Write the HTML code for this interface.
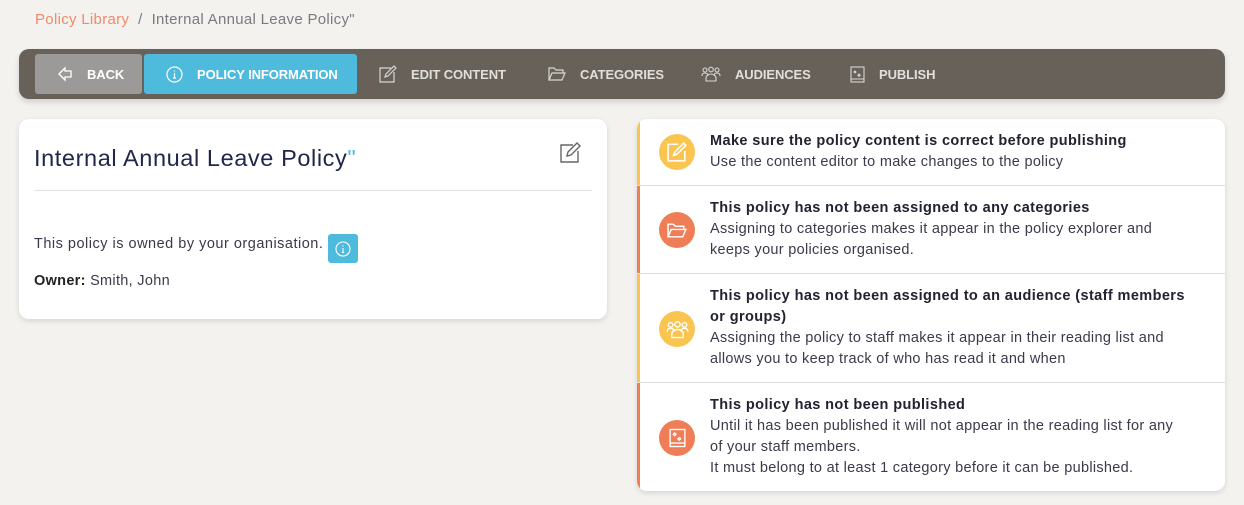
<!DOCTYPE html>
<html><head><meta charset="utf-8"><style>
*{box-sizing:border-box;margin:0;padding:0}
body{width:1244px;height:505px;background:#f3f2ef;font-family:"Liberation Sans",sans-serif;color:#2a2a33;position:relative;overflow:hidden}
.abs{position:absolute}
.bc{left:35px;top:11px;font-size:15px;color:#7a7a80;white-space:nowrap;letter-spacing:.3px}
.bc span.l{color:#ef8a6a}
.nav{left:19px;top:49px;width:1206px;height:50px;background:#67615a;border-radius:10px;box-shadow:0 3px 6px rgba(0,0,0,.15)}
.tab{position:absolute;top:5px;height:40px;display:flex;align-items:center;font-size:13px;font-weight:bold;color:#e2dfdb;white-space:nowrap;letter-spacing:-.1px}
.tab svg{margin-right:14px}
.card{background:#fff;border-radius:10px;box-shadow:0 2px 6px rgba(0,0,0,.12)}
.row{position:absolute;left:0;width:588px;border-top:1px solid #dedede}
.row .bar{position:absolute;left:0;top:0;bottom:0;width:3px}
.ic{position:absolute;left:22px;width:36px;height:36px;border-radius:50%;display:flex;align-items:center;justify-content:center}
.tx{position:absolute;left:73px;font-size:14.5px;line-height:21px;white-space:nowrap;letter-spacing:.3px;color:#3a3a4a}
.tx b{color:#222230;letter-spacing:.4px}
</style></head><body>
<div class="abs bc"><span class="l">Policy Library</span> &nbsp;/&nbsp; Internal Annual Leave Policy"</div>
<div class="abs nav">
 <div class="tab" style="left:16px;width:107px;background:#9b9a99;border-radius:3px;padding-left:22px"><svg width="16" height="16" viewBox="0 0 16 16" fill="none" stroke="#fff" stroke-width="1.3"><path d="M2 8 L8 2 V5 H14 V11 H8 V14 Z"/></svg><span style="color:#fff">BACK</span></div>
 <div class="tab" style="left:125px;width:213px;background:#4fbbdc;border-radius:3px;padding-left:22px"><svg width="17" height="17" viewBox="0 0 17 17" fill="none" stroke="#fff" stroke-width="1.2"><circle cx="8.5" cy="8.5" r="7.5"/><path d="M8.5 7v5M7 12h3M8.5 4.5v1"/></svg><span style="color:#fff">POLICY INFORMATION</span></div>
 <div class="tab" style="left:360px"><svg width="18" height="18" viewBox="0 0 18 18" fill="none" stroke="#d8d5d1" stroke-width="1.2"><path d="M12 3H1v14h14V7"/><path d="M6 12l1-3 8-8 2 2-8 8z"/></svg>EDIT CONTENT</div>
 <div class="tab" style="left:529px"><svg width="18" height="16" viewBox="0 0 18 16" fill="none" stroke="#d8d5d1" stroke-width="1.2"><path d="M1 14V2h5l2 2h7v3M1 14l3-7h13l-3 7z"/></svg>CATEGORIES</div>
 <div class="tab" style="left:682px"><svg width="20" height="16" viewBox="0 0 20 16" fill="none" stroke="#d8d5d1" stroke-width="1.1"><circle cx="4" cy="4" r="2"/><circle cx="10" cy="3.5" r="2.3"/><circle cx="16" cy="4" r="2"/><path d="M1 10c0-2 1-3 3-3s3 1 3 3M13 10c0-2 1-3 3-3s3 1 3 3M5 15v-3c0-2 2-4 5-4s5 2 5 4v3z"/></svg>AUDIENCES</div>
 <div class="tab" style="left:831px"><svg width="15" height="17" viewBox="0 0 15 17" fill="none" stroke="#d8d5d1" stroke-width="1.1"><rect x="1" y="1" width="13" height="15"/><path d="M1 13h13M5 5l1 1-1 1-1-1zM9 8l1.2 1.2L9 10.4 7.8 9.2z"/></svg>PUBLISH</div>
</div>

<div class="abs card" style="left:19px;top:119px;width:588px;height:200px">
 <div class="abs" style="left:15px;top:26px;font-size:23.5px;color:#22264a;letter-spacing:.6px">Internal Annual Leave Policy<span style="color:#4fbbdc">"</span></div>
 <svg class="abs" style="left:541px;top:23px" width="22" height="21" viewBox="0 0 22 21" fill="none" stroke="#666" stroke-width="1.4"><path d="M13 3H1v17h17V9"/><path d="M7 14l1-4 9-9 3 3-9 9z"/></svg>
 <div class="abs" style="left:15px;top:71px;width:558px;border-top:1px solid #e2e2e2"></div>
 <div class="abs" style="left:15px;top:117px;font-size:14.5px;color:#3a3a4a;letter-spacing:.5px;white-space:nowrap">This policy is owned by your organisation.</div>
 <div class="abs" style="left:309px;top:115px;width:30px;height:29px;background:#4fbbdc;border-radius:3px;display:flex;align-items:center;justify-content:center"><svg width="16" height="16" viewBox="0 0 16 16" fill="none" stroke="#fff" stroke-width="1.1"><circle cx="8" cy="8" r="7"/><path d="M8 7v4.5M6.8 11.5h2.4M8 4.5v1"/></svg></div>
 <div class="abs" style="left:15px;top:154px;font-size:14.5px;color:#3a3a4a;letter-spacing:.3px"><b style="color:#222">Owner:</b> Smith, John</div>
</div>

<div class="abs card" style="left:637px;top:119px;width:588px;height:372px;overflow:hidden">
 <div class="row" style="top:0;height:66px;border-top:none"><div class="bar" style="background:#f9c550"></div>
  <div class="ic" style="top:15px;background:#f9c550"><svg width="20" height="20" viewBox="0 0 18 18" fill="none" stroke="#fff" stroke-width="1.4"><path d="M10 2H1v15h15V8"/><path d="M6 12l1-3 8-8 2 2-8 8z"/></svg></div>
  <div class="tx" style="top:12px"><b>Make sure the policy content is correct before publishing</b><br>Use the content editor to make changes to the policy</div></div>
 <div class="row" style="top:66px;height:88px"><div class="bar" style="background:#ef7d55"></div>
  <div class="ic" style="top:26px;background:#ef7d55"><svg width="21" height="17" viewBox="0 0 20 16" fill="none" stroke="#fff" stroke-width="1.4"><path d="M1 14V2h5l2 2h8v3M1 14l3-7h14l-3 7z"/></svg></div>
  <div class="tx" style="top:12px"><b>This policy has not been assigned to any categories</b><br>Assigning to categories makes it appear in the policy explorer and<br>keeps your policies organised.</div></div>
 <div class="row" style="top:154px;height:109px"><div class="bar" style="background:#f9c550"></div>
  <div class="ic" style="top:37px;background:#f9c550"><svg width="23" height="19" viewBox="0 0 20 16" fill="none" stroke="#fff" stroke-width="1.2"><circle cx="4" cy="4" r="2"/><circle cx="10" cy="3.5" r="2.3"/><circle cx="16" cy="4" r="2"/><path d="M1 10c0-2 1-3 3-3s3 1 3 3M13 10c0-2 1-3 3-3s3 1 3 3M5 15v-3c0-2 2-4 5-4s5 2 5 4v3z"/></svg></div>
  <div class="tx" style="top:12px"><b>This policy has not been assigned to an audience (staff members<br>or groups)</b><br>Assigning the policy to staff makes it appear in their reading list and<br>allows you to keep track of who has read it and when</div></div>
 <div class="row" style="top:263px;height:109px"><div class="bar" style="background:#ef7d55"></div>
  <div class="ic" style="top:37px;background:#ef7d55"><svg width="17" height="20" viewBox="0 0 15 17" fill="none" stroke="#fff" stroke-width="1.2"><rect x="1" y="1" width="13" height="15"/><path d="M1 13h13M5 4l1.2 1.2L5 6.4 3.8 5.2zM9 8l1.2 1.2L9 10.4 7.8 9.2z"/></svg></div>
  <div class="tx" style="top:12px"><b>This policy has not been published</b><br>Until it has been published it will not appear in the reading list for any<br>of your staff members.<br>It must belong to at least 1 category before it can be published.</div></div>
</div>
</body></html>
